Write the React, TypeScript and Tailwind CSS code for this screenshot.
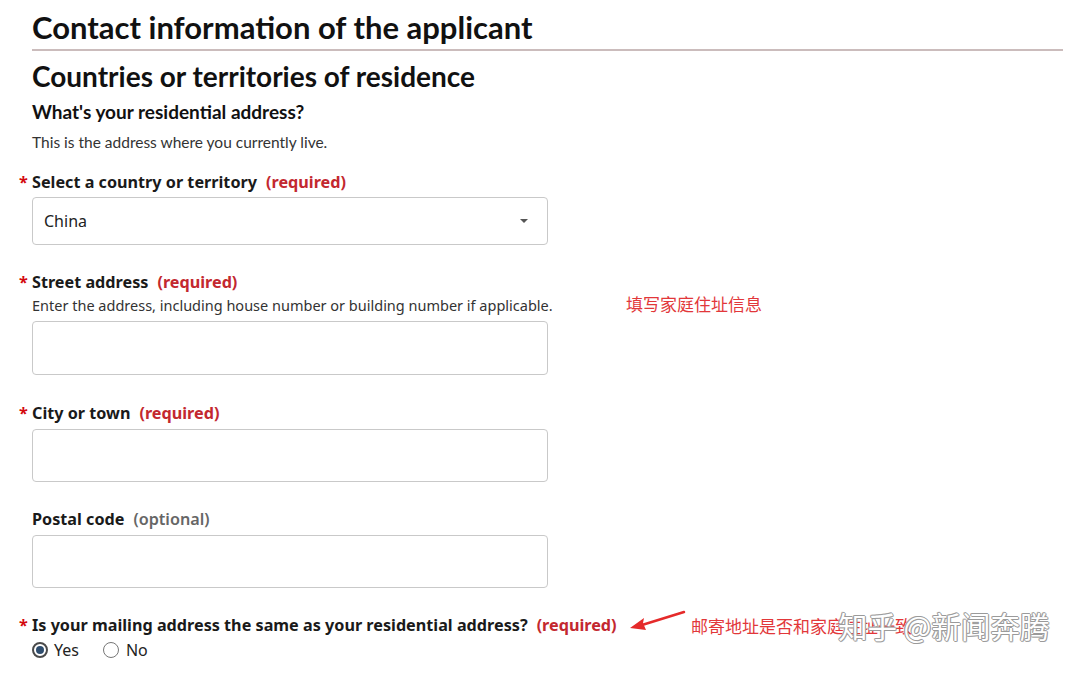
import React from 'react';

const heading = { fontFamily: 'Lato, "Noto Sans", sans-serif' };
const body = { fontFamily: '"Noto Sans", "Open Sans", sans-serif' };
const cjk = { fontFamily: '"Noto Sans CJK SC", sans-serif' };

const FieldLabel: React.FC<{ text: string; required?: boolean }> = ({ text, required = true }) => (
  <div className="flex items-center h-[20px] text-[16.2px] font-bold text-[#1a1a1a]" style={body}>
    <span className={`w-[13px] -ml-[13px] text-[#d3080c] ${required ? '' : 'invisible'}`}>*</span>
    <span>{text}</span>
    {required ? (
      <span className="ml-[9px] text-[#c3282f]">(required)</span>
    ) : (
      <span className="ml-[9px] text-[#666] font-semibold">(optional)</span>
    )}
  </div>
);

const TextBox: React.FC<{ h: string }> = ({ h }) => (
  <div className={`w-[516px] ${h} border border-[#c9c9c9] rounded-[4px] bg-white`} />
);

export default function App() {
  return (
    <div className="relative w-[1080px] h-[674px] bg-white overflow-hidden pl-[32px] pr-[17px]">
      <h1 className="pt-[9px] text-[31px] leading-[36px] font-bold text-[#111]" style={heading}>
        Contact information of the applicant
      </h1>
      <div className="mt-[4px] h-[2px] bg-[#cbbcbc]" />
      <h2 className="mt-[10px] text-[28px] leading-[30px] font-bold text-[#111]" style={heading}>
        Countries or territories of residence
      </h2>
      <h3 className="mt-[10px] text-[19px] leading-[22px] font-bold text-[#111]" style={heading}>
        What's your residential address?
      </h3>
      <p className="mt-[9px] text-[15.5px] leading-[20px] text-[#333]" style={heading}>
        This is the address where you currently live.
      </p>

      <div className="mt-[20px]">
        <FieldLabel text="Select a country or territory" />
      </div>
      <div
        className="mt-[5px] w-[516px] h-[48px] border border-[#c9c9c9] rounded-[4px] flex items-center justify-between pl-[11px] pr-[18px] text-[16px] text-[#222]"
        style={body}
      >
        <span>China</span>
        <svg width="10" height="6" viewBox="0 0 10 6">
          <path d="M1 1 L9 1 L5 5 Z" fill="#555" />
        </svg>
      </div>

      <div className="mt-[27px]">
        <FieldLabel text="Street address" />
      </div>
      <p className="mt-[3px] text-[14.5px] leading-[20px] text-[#333]" style={body}>
        Enter the address, including house number or building number if applicable.
      </p>
      <div className="mt-[6px]">
        <TextBox h="h-[54px]" />
      </div>

      <div className="mt-[28px]">
        <FieldLabel text="City or town" />
      </div>
      <div className="mt-[6px]">
        <TextBox h="h-[53px]" />
      </div>

      <div className="mt-[27px]">
        <FieldLabel text="Postal code" required={false} />
      </div>
      <div className="mt-[6px]">
        <TextBox h="h-[53px]" />
      </div>

      <div className="mt-[27px]">
        <FieldLabel text="Is your mailing address the same as your residential address?" />
      </div>
      <div className="mt-[3px] flex items-center text-[16px] text-[#222]" style={body}>
        <span className="w-[16px] h-[16px] rounded-full border-2 border-[#4a4a4a] flex items-center justify-center">
          <span className="w-[8px] h-[8px] rounded-full bg-[#2f4d6e]" />
        </span>
        <span className="ml-[6px]">Yes</span>
        <span className="ml-[24px] w-[16px] h-[16px] rounded-full border-[1.5px] border-[#777]" />
        <span className="ml-[7px]">No</span>
      </div>

      {/* annotations */}
      <div className="absolute left-[626px] top-[291px] text-[17px] text-[#e2373a]" style={cjk}>
        填写家庭住址信息
      </div>
      <svg className="absolute left-[628px] top-[608px]" width="60" height="26" viewBox="0 0 60 26">
        <path d="M56 4 L14 17" stroke="#e52a2a" strokeWidth="2.5" strokeLinecap="round" />
        <path d="M2 20 L16 10 L15 15 L18 22 Z" fill="#e52a2a" />
      </svg>
      <div className="absolute left-[691px] top-[613px] text-[17px] text-[#e2373a]" style={cjk}>
        邮寄地址是否和家庭住址一致
      </div>
      <div
        className="absolute left-[838px] top-[607px] text-[29.5px] leading-[36px] text-white"
        style={{
          ...cjk,
          textShadow:
            '1px 0 #9a9a9a, -1px 0 #9a9a9a, 0 1px #9a9a9a, 0 -1px #9a9a9a, 1px 1px #bbb, -1px -1px #bbb',
        }}
      >
        知乎 @新闻奔腾
      </div>
    </div>
  );
}
